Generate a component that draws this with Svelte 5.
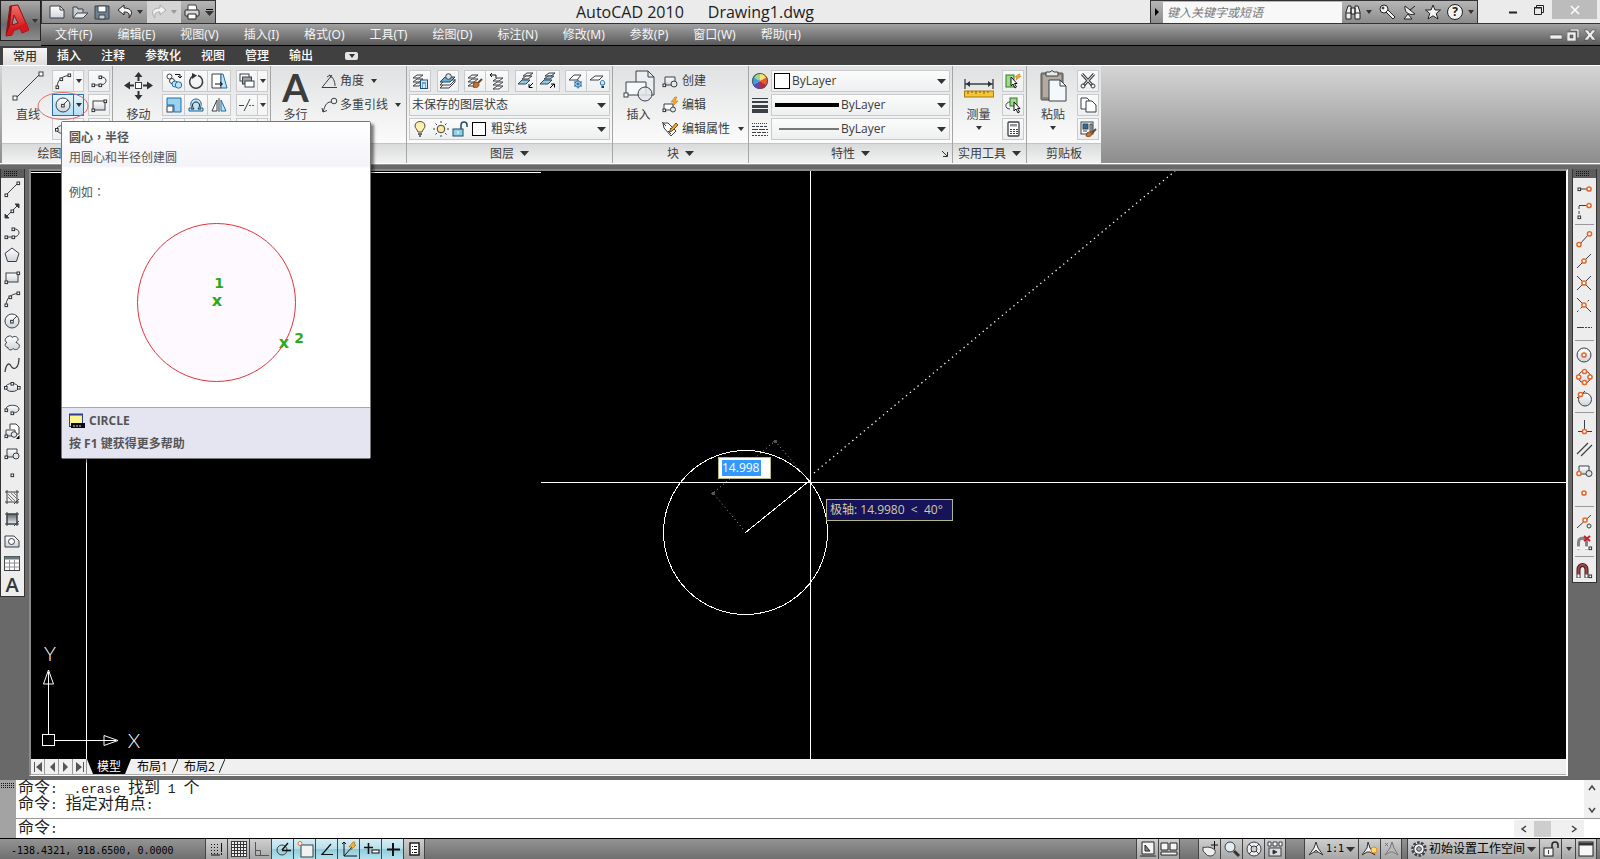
<script>
  const menus = ['文件(F)', '编辑(E)', '视图(V)', '插入(I)', '格式(O)', '工具(T)', '绘图(D)', '标注(N)', '修改(M)', '参数(P)', '窗口(W)', '帮助(H)']
  const tabs = ['常用', '插入', '注释', '参数化', '视图', '管理', '输出']

  const drawTools = [
    ['line', '直线'], ['xline', '构造线'], ['pline', '多段线'], ['polygon', '正多边形'], ['rect', '矩形'],
    ['arc', '圆弧'], ['circle', '圆'], ['cloud', '修订云线'], ['spline', '样条曲线'], ['ellipse', '椭圆'],
    ['ellarc', '椭圆弧'], ['insertBlock', '插入块'], ['makeBlock', '创建块'], ['point', '点'], ['hatch', '图案填充'],
    ['gradient', '渐变色'], ['region', '面域'], ['table', '表格'], ['text', '多行文字'],
  ]

  const snapTools = [
    [['trackPoint', '临时追踪点'], ['snapFrom', '捕捉自']],
    [['endpoint', '端点'], ['midpoint', '中点'], ['intersection', '交点'], ['apparent', '外观交点'], ['extension', '延长线']],
    [['center', '圆心'], ['quadrant', '象限点'], ['tangent', '切点']],
    [['perp', '垂足'], ['parallel', '平行线'], ['snapInsert', '插入点'], ['node', '节点']],
    [['nearest', '最近点'], ['snapNone', '无捕捉']],
    [['magnet', '对象捕捉设置']],
  ]

  const modes = [
    ['snap', '捕捉', false], ['grid', '栅格', false], ['ortho', '正交', false], ['polar', '极轴', true],
    ['osnap', '对象捕捉', true], ['otrack', '对象追踪', true], ['ducs', '动态 UCS', true], ['dyn', '动态输入', true],
    ['lwt', '线宽', true], ['qp', '快捷特性', false],
  ]

  const modifyRows = [
    [['copy', '复制'], ['rotate', '旋转'], ['stretch', '拉伸']],
    [['scale', '缩放'], ['offset', '偏移'], ['mirror', '镜像']],
    [['rect', '打断'], ['arc', '圆角'], ['line', '分解']],
  ]

  const layerGroups = [
    [['layerProps', '图层特性']],
    [['layerCurrent', '置为当前']],
    [['layerMatch', '匹配'], ['layerPrev', '上一个']],
    [['layerIso', '隔离'], ['layerUniso', '取消隔离']],
    [['layerFreeze', '冻结'], ['layerOff', '关闭']],
  ]

  // small square grip and orange snap marker
  const sq = (x, y) => `<rect x="${x - 1}" y="${y - 1}" width="2.6" height="2.6" fill="#fff" stroke="#2d3236"/>`
  const dot = (x, y) => `<circle cx="${x}" cy="${y}" r="2.1" fill="#fff" stroke="#e8672a" stroke-width="1.5"/>`
  const sheet = (x, y, fill = '#f4f6f8') => `<path d="M${x} ${y + 3}l4-3h6l-4 3z" fill="${fill}"/>`
  const sheets = (x, fill) => sheet(x, 10, fill) + sheet(x, 6, fill) + sheet(x, 2, fill)

  const icons = {
    line: `<path d="M2 14 14 2"/>${sq(2, 14)}${sq(14, 2)}`,
    xline: `<path d="M2 14 14 2"/><path d="M1 15v-4l4 4zM15 1v4l-4-4z" fill="#2d3236"/>${sq(8, 8)}`,
    pline: `<path d="M2 12h7M9 4c8-1 8 8 0 8"/>${sq(2, 12)}${sq(9, 12)}${sq(9, 4)}`,
    polygon: `<path d="m8 1 7 5.4L12.400 14.500H3.600L1 6.400z" fill="url(#pale)"/>`,
    rect: `<rect x="2" y="4" width="12" height="9" fill="url(#pale)"/>${sq(2, 13)}${sq(14, 4)}`,
    arc: `<path d="M2 15C2 8 6 3 14 2.500"/>${sq(2, 14)}${sq(6, 6)}${sq(14, 2)}`,
    circle: `<circle cx="8" cy="8" r="7" fill="url(#pale)"/><path d="m8 8 5-5"/>${sq(7.6, 8.4)}`,
    cloud: `<path d="M4 1.500c2-1 3-1 4 1 2-2 6-1 6 2 0 2-2 2-2 3 3 1 4 3 3 5s-4 3-6 1c-1 2-5 2-5-1-3 0-4-4-1-5-3-1-2-5 1-6z" fill="url(#pale)"/>`,
    spline: `<path d="M1 15c1-8 4-10 6-6 3 5 8 2 8-8" stroke-width="1.300"/>`,
    ellipse: `<ellipse cx="8" cy="8.500" rx="6.500" ry="4" fill="url(#pale)"/>${sq(1.500, 8.500)}${sq(14.500, 8.500)}${sq(8, 4.500)}`,
    ellarc: `<path d="M2 8c0-5 13-5 13 0 0 3-4 4-7 4" fill="url(#pale)"/>${sq(2, 9)}${sq(8, 12)}`,
    insertBlock: `<path d="M6 6V1h6l3 3v7h-4" fill="#fff"/><path d="M2 13V7h9v6z" fill="url(#pale)"/><circle cx="10" cy="11.500" r="2.800" fill="#e2e6ea"/>${sq(2, 13)}<path d="M15.500 12v4H12z" fill="#000" stroke="none"/>`,
    makeBlock: `<path d="M3 12V4h10v8z" fill="url(#pale)"/><circle cx="12" cy="11" r="3" fill="#e2e6ea"/>${sq(2, 12)}`,
    point: `${sq(8, 8)}`,
    hatch: `<path d="M1 3h14M1 13h14M3 1v14M13 1v14M10 15l5-5"/><path d="M4 5l7 7M4 8l4 4M7 4l6 6M10 4l3 3" stroke="#777"/>`,
    gradient: `<rect x="3" y="3" width="10" height="10" fill="url(#dark)"/><path d="M1 3h14M1 13h14M3 1v14M13 1v14M10 15l5-5"/>`,
    region: `<path d="M1 3h9l5 5v6H1z" fill="url(#pale)"/><circle cx="7.500" cy="8.500" r="3" fill="#fff"/>`,
    table: `<rect x=".5" y="1.500" width="15" height="14" fill="#fff"/><path d="M.5 3h15" stroke-width="3" stroke="#6d757c"/><path d="M.5 8h15M.5 12h15M5.500 5v10M10.500 5v10" stroke="#8a9096"/>`,

    trackPoint: `<path d="M3 8h8"/>${sq(3, 8)}${dot(13, 8)}`,
    snapFrom: `<path d="M3 2.500h8"/><path d="M3 3v10" stroke-dasharray="3 2"/>${sq(3, 14)}${dot(13, 2.500)}`,
    endpoint: `<path d="M3 14 13 3"/>${dot(3, 13.500)}${dot(13.500, 2.800)}`,
    midpoint: `<path d="M1 15 15 1"/>${dot(8, 8)}`,
    intersection: `<path d="m1 1 14 14M1 15 15 1"/>${dot(8, 8)}`,
    apparent: `<path d="m1 1 14 14"/><path d="M1 15 15 1" stroke-dasharray="2 3"/>${dot(8, 8)}`,
    extension: `<path d="M1 8.500h7"/><path d="M9 8.500h7" stroke-dasharray="2 1"/>`,
    center: `<circle cx="8" cy="8" r="7" fill="url(#pale)"/>${dot(8, 8)}`,
    quadrant: `<circle cx="8.500" cy="8" r="6" fill="url(#pale)"/>${dot(8.500, 2.500)}${dot(8.500, 13.500)}${dot(2.700, 8)}${dot(14, 8)}`,
    tangent: `<circle cx="9" cy="8.500" r="6.500" fill="url(#pale)"/><path d="m1 7 8-7"/>${dot(4.500, 3.500)}`,
    perp: `<path d="M8.500 1v12M2 12.500h14"/>${dot(8.500, 12.500)}`,
    parallel: `<path d="M1 13 12 2M5 15 16 4" stroke-width="1.200"/>`,
    snapInsert: `<path d="M3 11V3h10v8z" fill="url(#pale)"/><circle cx="13" cy="10.500" r="3" fill="#dfe4e8"/>${dot(3, 10.500)}`,
    node: dot(8, 8),
    nearest: `<path d="M1 15 15 2"/><circle cx="13" cy="13" r="2"/>${dot(9, 7)}`,
    snapNone: `<path d="M2.500 15V7c0-5 8-5 8 0v8" stroke="#858585" stroke-width="3"/><path d="M1 13h3M9 13h3" stroke="#fff" stroke-width="3"/><path d="m8 1 6 5M14 1 8 6" stroke="#d3161d" stroke-width="1.800"/>${sq(14, 13)}`,
    magnet: `<path d="M2.500 15V6.500c0-6 8-6 8 0V15" stroke="#3a2020" stroke-width="4"/><path d="M2.500 15V6.500c0-6 8-6 8 0V15" stroke="#a2474b" stroke-width="2"/><path d="M1.500 13h2M9.500 13h2" stroke="#fff" stroke-width="3"/>${sq(14, 13)}`,

    copy: `<circle cx="3.500" cy="3.500" r="2.500" fill="#fff"/><circle cx="6" cy="8" r="2.500" fill="#fff"/><path d="M9 1.500h5V5M12 3l2 2 2-2" stroke="#111"/><circle cx="9" cy="11" r="3" fill="#bfe4f7" stroke="#1f6fa8"/><circle cx="12.500" cy="12" r="3.200" fill="#bfe4f7" stroke="#1f6fa8"/>`,
    rotate: `<path d="M10 2.500a6.500 6.500 0 1 1-5 .5" stroke-width="1.500"/><path d="M4 0l5 2.500L4 6z" fill="#333" stroke="none"/>`,
    stretch: `<path d="M1 15V1h9v14z" fill="#fff"/><path d="M10 1h2l4 14h-6z" fill="#bfe4f7" stroke="#1f6fa8"/><path d="M4 11h7M9 9l2.500 2L9 13" stroke="#111"/>`,
    scale: `<path d="M1 1h14v14H8V8H1z" fill="#9bd3ee" stroke="#1f6fa8"/><rect x="1" y="9" width="6" height="6" fill="#fff"/>`,
    offset: `<path d="M1 14h14v-3h-3c3-5 0-9-4-9s-7 4-4 9H1z" fill="#bfe4f7" stroke="#1f5f95"/><path d="M3 12h3c-3-4-1-7 2-7s5 3 2 7h3" stroke="#222"/>`,
    mirror: `<path d="M1 14h5V3z" fill="#fff"/><path d="M15 14h-5V3z" fill="#bfe4f7" stroke="#1f6fa8"/><path d="M8 1v14"/>`,
    array: `<rect x="1" y="1" width="9" height="7" fill="#fff"/><rect x="3.500" y="4" width="9" height="7" fill="#9aa2a8"/><rect x="6" y="8" width="9" height="6" fill="#fff"/>`,
    trim: `<path d="M0 8.500h5"/><path d="M10 8.500h6" stroke="#1f6fa8" stroke-dasharray="2 1"/><path d="M5 14 11 2"/>`,
    angleDim: `<path d="M1 14.500h15M1 14.500 11 2M8 2c4 2 6 6 6 11M6 4l3-2 1 3"/>`,
    leader: `<path d="M2 15C4 9 5 5 10 5M1 11l1 4 4-1.500"/><circle cx="13" cy="4" r="2.800"/>`,

    layerProps: sheets(1) + `<rect x="8.500" y="7" width="7" height="8.500" fill="#d5ebf7" stroke="#1d4f7c"/><path d="M10 10h4M10 12h1M13 12h1M10 14h1M13 14h1" stroke="#1d4f7c"/>`,
    layerCurrent: `<path d="M0 15h9l6-6v-3M0 15l3-3" /><path d="M0 12l5-5h10l-5 5z" fill="#fff"/><path d="M0 9l5-5h10l-5 5z" fill="#5fb2e0"/><circle cx="8.500" cy="3.500" r="2.800" fill="#dce1e5"/>`,
    layerMatch: sheets(1) + `<path d="m15 6-4 4" stroke="#6b4322" stroke-width="2"/><path d="M7 10c3-2 5 0 5 2-1 3-4 3-6 2z" fill="#c8732d" stroke="#81451a"/>`,
    layerPrev: `<g transform="translate(4 3)">${sheets(0)}</g><path d="M7 5V2H1M3 0 1 2l2 2" stroke="#111"/>`,
    layerIso: sheet(5, 0) + sheet(4, 3) + `<path d="M0 11l4-4h8l-4 4z" fill="#8ccbec"/><path d="m15 10-4 4M11 11v3.500h3.500" stroke="#000"/>`,
    layerUniso: sheet(5, 0) + sheet(4, 3, '#8ccbec') + `<path d="M0 11l4-4h8l-4 4z" fill="#8ccbec"/><path d="m10 15 4-4M11 11h3.500v3.500" stroke="#000"/>`,
    layerFreeze: `<path d="M1 7l5-5h7L9 7z" fill="#fff"/><circle cx="10" cy="11" r="3.200" fill="#fff" stroke="#1f6fa8"/><path d="M10 6.500v9M6 8.700l8 4.600M6 13.300l8-4.600" stroke="#1f6fa8"/>`,
    layerOff: `<path d="M0 7l5-4h8L9 7z" fill="#fff"/><path d="M11 12c-3-6 6-6 3 0z" fill="#cfe8f7" stroke="#1f6fa8"/><path d="M11.500 14h2.500" stroke="#333" stroke-width="2"/>`,
    bulb: `<path d="M6 11C5 8 3 7 3 5c0-6 10-6 10 0 0 2-2 3-3 6z" fill="#ffeeb0" stroke="#54493a"/><path d="M6 13h4M7 15h2" stroke="#444" stroke-width="1.500"/>`,
    sun: `<circle cx="8" cy="8" r="3.800" fill="#ffe89a"/><path d="M8 0v2M8 14v2M0 8h2M14 8h2M2.500 2.500 4 4M12 12l1.500 1.500M2.500 13.500 4 12M12 4l1.500-1.500"/>`,
    unlock: `<rect x="1" y="8" width="10" height="7" fill="#8fd0e6" stroke="#1c4c66"/><path d="M9 8V4c0-4 6-4 6 0v2" stroke="#1c4c66" stroke-width="1.500"/><path d="M6 10v3" stroke="#fff"/>`,
    blockEdit: `<path d="M2 13V7h9v6z" fill="#fff"/><circle cx="11" cy="12.500" r="2.500" fill="#e2e6ea"/>${sq(2, 13)}<path d="m13 0-4 5h3l-1 4 5-5h-3l2-4z" fill="#f6a623" stroke="#c86a10" stroke-width=".5"/>`,
    blockAttr: `<path d="M1 2h5l8 8-5 5-7-8z" fill="#fff"/><path d="M0 1l4 4M6 10l3 3M8 7l3 3"/><path d="m8 9 6-7 2 2-6 6-2.500 1z" fill="#f0a63a" stroke="#7a4d12"/>`,
    weights: `<path d="M0 1.500h16" /><path d="M0 5h16" stroke-width="2"/><path d="M0 9.500h16" stroke-width="3"/><path d="M0 14h16" stroke-width="4"/>`,
    types: `<path d="M0 2.500h16" stroke-dasharray="1 1"/><path d="M0 5.500h16" stroke-dasharray="3 1"/><path d="M0 8.500h16" stroke-dasharray="6 1"/><path d="M0 11.500h16" stroke-dasharray="4 1"/><path d="M0 14.500h16" stroke-dasharray="2 1"/>`,
    colors: `<g stroke="none"><path d="M8 8 8 0a8 8 0 0 1 7 4z" fill="#f6c71c"/><path d="M8 8l7-4a8 8 0 0 1 0 8z" fill="#ef5a24"/><path d="m8 8 7 4a8 8 0 0 1-7 4z" fill="#c2273f"/><path d="M8 8v8a8 8 0 0 1-7-4z" fill="#5b46c4"/><path d="m8 8-7 4a8 8 0 0 1 0-8z" fill="#3ba1dc"/><path d="M8 8 1 4a8 8 0 0 1 7-4z" fill="#52b848"/></g><circle cx="8" cy="8" r="7.500" stroke="#555"/><ellipse cx="8" cy="4" rx="5" ry="3" fill="#fff" opacity=".45" stroke="none"/>`,
    quickSelect: `<rect x="1" y="2" width="8" height="12" fill="#9edb8c" stroke="#2c7a27"/><path d="M6 4v9l2-2 2 4 1.500-1-2-3.500H12z" fill="#fff" stroke="#111"/><path d="m14 1-4 3h2l-1 3 5-4h-2l1-2z" fill="#f6a623" stroke="#c86a10" stroke-width=".5"/>`,
    selectAll: `<path d="M5 5c-5 0-6 7 0 7" /><rect x="5" y="1" width="7" height="8" fill="#9edb8c" stroke="#2c7a27"/><path d="M9 5v9l2-2 2 4 1.500-1-2-3.500H15z" fill="#fff" stroke="#111"/>`,
    calc: `<rect x="3" y="1" width="11" height="14" rx="1" fill="#fff" stroke-width="1.300"/><rect x="5" y="3" width="7" height="2.500" fill="#8d949a" stroke="none"/><path d="M5 8.500h8M5 10.500h8M5 12.500h8" stroke-dasharray="2 1"/>`,
    cut: `<path d="m2 1 10 11M14 1 4 12" stroke-width="3"/><path d="m2 1 10 11M14 1 4 12" stroke="#fff"/><circle cx="3" cy="13" r="2"/><circle cx="13" cy="13" r="2"/>`,
    copyClip: `<path d="M1 12V1h6l2 2v9z" fill="#fff"/><path d="M6 15V4h6l4 4v7z" fill="#fff"/>`,
    matchProps: `<rect x="1" y="1" width="12" height="12" fill="#fff"/><rect x="3" y="3" width="5" height="5" fill="#2d6aa5"/><path d="M10 3h2v8h-2zM3 10h4" fill="#ccc"/><path d="m16 8-4 4" stroke="#6b4322" stroke-width="2"/><path d="M7 12c3-2 5 0 5 1-1 3-4 3-6 2z" fill="#c8732d" stroke="#81451a"/>`,

    new: `<path d="M1 2h10l4 4v8H1z" fill="url(#pale)"/><path d="M11 2v4h4"/>`,
    open: `<path d="M1 14V3h4l1 2h5v3" fill="#c9ced3"/><path d="m1 14 4-5h11l-5 5z" fill="#e6eaee"/>`,
    save: `<path d="M1 2h14v13H1z" fill="#6e8296"/><path d="M4 2h8v6H4z" fill="#fff"/><path d="M5 11h6v4H5z" fill="#ccd2d8"/>`,
    undo: `<path d="M7 1 1 6l6 5V8c4 0 6 1 5 6 5-6 2-10-5-10z" fill="#f4f4f4" stroke="#222"/>`,
    redo: `<path d="m9 1 6 5-6 5V8c-4 0-6 1-5 6-5-6-2-10 5-10z" fill="#f0f0f0" stroke="#aaa"/>`,
    print: `<path d="M4 6V1h8l1 5" fill="#fff"/><rect x="1" y="6" width="14" height="6" rx="1" fill="#d5d9dc" stroke="#222"/><path d="M4 10h8v5H4z" fill="#fff" stroke="#222"/>`,
    binoculars: `<path d="M1 15V8l2-6h3v13zM10 15V2h3l2 6v7zM6 4h4v6H6z" fill="#eee" stroke="#222"/><path d="M1 9h5M10 9h5" stroke="#222"/>`,
    key: `<circle cx="5" cy="5" r="4" fill="#f2f2f2" stroke="#222"/><path d="m7 8 7 7 2-2-7-7z" fill="#f2f2f2" stroke="#222"/><circle cx="4" cy="4" r="1" fill="#222"/>`,
    dish: `<path d="M3 2c-1 6 4 10 10 8z" fill="#eee" stroke="#222"/><path d="m8 6 5-4M2 15l4-5 4 5z" fill="#eee" stroke="#222"/>`,
    star: `<path d="m8 1 2 5h5.500l-4.300 3.500L13 15l-5-3.200L3 15l1.800-5.500L.5 6H6z" fill="#f4f4f4" stroke="#222"/>`,

    snap: `<path d="M2 3.500h9M2 6.500h9M2 9.500h9M2 12.500h9" stroke-dasharray="1 2" stroke="#111"/><path d="M2 14h9M12.500 2v9M12.500 12v2" stroke="#111"/>`,
    grid: `<rect x=".5" y=".5" width="15" height="15" fill="#eee"/><path d="M.5 3.500h15M.5 6.500h15M.5 9.500h15M.5 12.500h15M3.500 .5v15M6.500 .5v15M9.500 .5v15M12.500 .5v15" stroke="#333"/>`,
    ortho: `<path d="M2.500 1v13.500H16M2.500 9.500h5v5" stroke="#555"/>`,
    polar: `<circle cx="7" cy="9" r="5"/><path d="M7 9l6-7M7 9.500h9" stroke="#111" stroke-width="1.400"/>`,
    osnap: `<rect x="4" y="4" width="12" height="12" fill="#f2f2f2"/><circle cx="3" cy="2.500" r="2" fill="#fff" stroke="#e8672a"/>`,
    otrack: `<path d="M12 3 3 13.500h11" stroke="#111" stroke-width="1.200"/>`,
    ducs: `<path d="M3 1v14h13M3 15 12 5M1 3l2-2 2 2" stroke="#111"/><path d="m12 1-4 5h3l-1 3 5-5h-2l1-3z" fill="#f6b52c" stroke="#a86410" stroke-width=".6"/>`,
    dyn: `<path d="M5.500 2v11M1 6.500h9" stroke="#111" stroke-width="1.600"/><rect x="9" y="9" width="7" height="3" fill="#fff" stroke="#111"/>`,
    lwt: `<path d="M8 2v13M2 8.500h13" stroke="#111" stroke-width="2"/>`,
    qp: `<rect x="4" y="2" width="9" height="12" fill="#fff" stroke="#111" stroke-width="1.400"/><path d="M6 5.500h5M6 8.500h5M6 11.500h5" stroke="#111" stroke-dasharray="1 1 3"/>`,

    modelSpace: `<path d="M2 1h12v12H2z" fill="#f5f5f5" stroke="#222"/><path d="M5 4v6h5z" fill="#888" stroke="#222"/><path d="M0 15h16" stroke="#222"/>`,
    viewports: `<path d="M0 2h7v7H0zM9 2h7v7H9zM0 11h16v3H0z" fill="#f5f5f5" stroke="#222"/>`,
    pan: `<path d="M1 6c3 1 3 0 5 0l4 1 3 2c1 4-2 6-5 6-4 0-4-3-7-5z" fill="#eee"/><path d="M12.500 0v8M9 4h7" stroke="#111"/>`,
    zoom: `<circle cx="6" cy="6" r="5" fill="#e3edf4"/><path d="m10 10 5 5" stroke="#333" stroke-width="3"/>`,
    wheel: `<circle cx="8" cy="8" r="7" fill="#eee"/><circle cx="8" cy="8" r="3" fill="#ccc"/><path d="M3 3l3 3M10 10l3 3M13 3l-3 3M3 13l3-3"/>`,
    motion: `<path d="M1 1h3v4H1zM6 1h4v4H6zM12 1h3v4h-3z" fill="#fff"/><rect x="2" y="7" width="12" height="8" fill="#ddd"/><path d="m6 9 4 2-4 2z" fill="#222"/>`,
    anno: `<path d="M8 1 6 7l-5 7 5-3h4l5 3-5-7z" fill="#f4f4f4" stroke="#333"/><path d="M6 11l2-2 2 2" />`,
    annoSun: `<path d="M6 1 5 7l-5 7 5-3h3l5 3-5-7z" fill="#f4f4f4" stroke="#333"/><circle cx="12" cy="9" r="3" fill="#ffd76a" stroke="#e58a1f"/>`,
    annoOff: `<path d="M9 1 7 7l-5 7 5-3h3l5 3-4-7zM2 2l3 3M2 5l3-3" fill="#bbb" stroke="#777"/>`,
    gear: `<circle cx="8" cy="8" r="6.500" fill="#eee" stroke-dasharray="2.500 1.500" stroke-width="2.500"/><circle cx="8" cy="8" r="5.200" fill="#f2f2f2"/><circle cx="8" cy="8" r="2.300" fill="#aaa"/>`,
    lock: `<rect x="1" y="7" width="9" height="8" fill="#f5f5f5" stroke="#222"/><path d="M9 7V4c0-4 6-4 6 0v3" stroke="#222" stroke-width="1.500"/><path d="M5.500 9v4"/>`,
    clean: `<rect x="1" y="1" width="14" height="14" fill="#f7f7f7" stroke="#222"/><path d="M1 3h14" stroke="#333" stroke-width="3"/>`,

    bigLine: `<path d="M4 28 28 4"/><rect x="1" y="26" width="4" height="4" fill="#fff"/><rect x="27" y="2" width="4" height="4" fill="#fff"/>`,
    bigMove: `<rect x="12.500" y="12.500" width="6" height="6" fill="#fff"/><path d="M15.500 2l4 5h-3v4h-2V7h-3zM15.500 30l4-5h-3v-4h-2v4h-3zM1 15.500l6-4v3h4v2H7v3zM30 15.500l-6-4v3h-4v2h4v3z" fill="#2d3236" stroke="none"/>`,
    bigInsert: `<path d="M13 14V1h12l6 6v18H20" fill="#eceff1"/><path d="M25 1v6h6"/><path d="M3 25V12h20v13z" fill="#f6f8f9"/><circle cx="22" cy="24" r="7" fill="#e3e7ea" fill-opacity=".85"/><rect x="1" y="23" width="4" height="4" fill="#fff"/>`,
    bigMeasure: `<path d="M2 9v10M30 9v10M2 14h28" stroke-width="1.300"/><path d="m3 14 4-3v6zM29 14l-4-3v6z" fill="#2d3236" stroke="none"/><rect x="1.500" y="21" width="29" height="6" fill="#f4c535" stroke="#a77a12"/><path d="M5 21v3M9 21v2M13 21v3M17 21v2M21 21v3M25 21v2" stroke="#7d5c0c"/>`,
    bigPaste: `<rect x="4" y="3" width="22" height="27" rx="1" fill="#8c867f" stroke="#55504b"/><rect x="6" y="5" width="18" height="22" fill="#b1aba4" stroke="none"/><path d="M9 6V2h4q2-3 4 0h4v4z" fill="#e9e9e9"/><path d="M12 31V10h11l6 6v15z" fill="#f5f8fa"/><path d="M23 10v6h6"/>`,
  }
</script>

{#snippet icon(name)}
  <svg class="icon" viewBox="0 0 16 16" aria-hidden="true">
    {#if name === 'text'}
      <text x="8" y="15" text-anchor="middle" class="glyph">A</text>
    {:else}
      <g>{@html icons[name]}</g>
    {/if}
  </svg>
{/snippet}

{#snippet bigIcon(name)}
  <svg class="icon big" viewBox="0 0 32 32" aria-hidden="true"><g>{@html icons[name]}</g></svg>
{/snippet}

{#snippet caret()}
  <svg class="caret" viewBox="0 0 9 5" aria-hidden="true"><path d="M0 0h9L4.500 5z" /></svg>
{/snippet}

{#snippet smallCaret()}
  <svg class="caret small" viewBox="0 0 6 4" aria-hidden="true"><path d="M0 0h6L3 4z" /></svg>
{/snippet}

{#snippet split(name, label, active = false)}
  <div class="split" class:active>
    <button class="tool" aria-label={label}>{@render icon(name)}</button>
    <button class="drop" aria-label="{label}选项">{@render smallCaret()}</button>
  </div>
{/snippet}

<svg class="defs" aria-hidden="true">
  <defs>
    <linearGradient id="pale" x1="0" y1="0" x2="0" y2="1">
      <stop offset="0" stop-color="#fff" />
      <stop offset="1" stop-color="#cfd5da" />
    </linearGradient>
    <linearGradient id="dark" x1="0" y1="0" x2="0" y2="1">
      <stop offset="0" stop-color="#5d666d" />
      <stop offset="1" stop-color="#eceff1" />
    </linearGradient>
    <linearGradient id="ruby" x1="0" y1="0" x2="0" y2="1">
      <stop offset="0" stop-color="#f0706a" />
      <stop offset="0.6" stop-color="#dc2a2c" />
      <stop offset="1" stop-color="#c0161c" />
    </linearGradient>
  </defs>
</svg>

<div class="app">
  <header>
    <button class="logo" aria-label="应用程序菜单">
      <svg viewBox="0 0 24 34" width="24" height="34" aria-hidden="true">
        <path d="M5 2 13 1l11 25-7 3-2-5c-2 1-4 2-6 2l-2 5-6 1z" fill="url(#ruby)" stroke="#8b1216" />
        <path d="m9 11 4 8-6 2z" fill="#9a9a9a" stroke="#8b1216" />
        <path d="M5 2h2L5 22 2 31l-1 1z" fill="#8e1015" />
        <path d="M1 32 4 24c7 0 12-2 17-6l3 8-7 3-2-5c-2 1-4 2-6 2l-2 5z" fill="#d3191f" />
      </svg>
      {@render smallCaret()}
    </button>

    <div class="titlebar">
      <div class="quick">
        <button aria-label="新建">{@render icon('new')}</button>
        <button aria-label="打开">{@render icon('open')}</button>
        <button aria-label="保存">{@render icon('save')}</button>
        <button class="wide" aria-label="放弃">{@render icon('undo')}{@render smallCaret()}</button>
        <button class="wide faded" aria-label="重做">{@render icon('redo')}{@render smallCaret()}</button>
        <button aria-label="打印">{@render icon('print')}</button>
        <button class="custom" aria-label="自定义快速访问工具栏"><i></i>{@render caret()}</button>
      </div>
      <h1><span>AutoCAD 2010</span><span>Drawing1.dwg</span></h1>
      <div class="search">
        <button class="toggle" aria-label="展开搜索"><svg viewBox="0 0 4 8" width="4" height="8"><path d="M0 0l4 4-4 4z" /></svg></button>
        <input type="text" placeholder="键入关键字或短语" aria-label="搜索" />
        <button class="wide" aria-label="查找">{@render icon('binoculars')}{@render smallCaret()}</button>
        <button aria-label="速博应用中心">{@render icon('key')}</button>
        <button aria-label="通讯中心">{@render icon('dish')}</button>
        <button aria-label="收藏夹">{@render icon('star')}</button>
        <button class="wide" aria-label="帮助"><b class="help">?</b>{@render smallCaret()}</button>
      </div>
      <div class="window-buttons">
        <button aria-label="最小化"><svg viewBox="0 0 12 12"><path d="M2 8.500h8" stroke-width="2" /></svg></button>
        <button aria-label="还原"><svg viewBox="0 0 12 12"><path d="M1.500 3.500h7v7h-7zM3.500 3V1.500h7v7H9M1 4h8" /></svg></button>
        <button class="close" aria-label="关闭"><svg viewBox="0 0 12 12"><path d="m2 2 8 8M10 2l-8 8" stroke-width="1.500" /></svg></button>
      </div>
    </div>

    <nav class="menubar">
      {#each menus as menu}
        <button>{menu}</button>
      {/each}
      <div class="doc-buttons">
        <button aria-label="最小化图形"><svg viewBox="0 0 12 12"><path d="M0 6h12v4H0z" /></svg></button>
        <button aria-label="还原图形"><svg viewBox="0 0 12 12"><path d="M3 0h9v9h-2V2H3zM0 3h9v9H0zM3 6v3h3V6z" fill-rule="evenodd" /></svg></button>
        <button aria-label="关闭图形"><svg viewBox="0 0 12 12"><path d="M0 1h4l2 3 2-3h4L8 6l4 5H8L6 8l-2 3H0l4-5z" /></svg></button>
      </div>
    </nav>
  </header>

  <nav class="tabs">
    {#each tabs as tab, i}
      <button class:current={i === 0}>{tab}</button>
    {/each}
    <button class="minimize" aria-label="最小化功能区"><span>{@render smallCaret()}</span></button>
  </nav>

  <div class="ribbon">
    <section class="panel draw">
      <div class="body">
        <button class="large">{@render bigIcon('bigLine')}直线</button>
        <div class="stack">
          <div class="row">{@render split('arc', '圆弧')}<button class="tool" aria-label="多段线">{@render icon('pline')}</button></div>
          <div class="row">{@render split('circle', '圆', true)}<button class="tool" aria-label="矩形">{@render icon('rect')}</button></div>
          <div class="row">{@render split('ellipse', '椭圆')}<button class="tool" aria-label="图案填充">{@render icon('hatch')}</button></div>
        </div>
      </div>
      <h2>绘图 {@render caret()}</h2>
    </section>

    <section class="panel modify">
      <div class="body">
        <button class="large">{@render bigIcon('bigMove')}移动</button>
        <div class="stack">
          {#each modifyRows as row, i}
            <div class="row">
              <div class="group">
                {#each row as [name, label]}
                  <button class="tool" aria-label={label}>{@render icon(name)}</button>
                {/each}
              </div>
              {@render split(i === 0 ? 'array' : 'trim', i === 0 ? '阵列' : '修剪')}
            </div>
          {/each}
        </div>
      </div>
      <h2>修改 {@render caret()}</h2>
    </section>

    <section class="panel annotate">
      <div class="body">
        <button class="large"><b class="big-a">A</b>多行</button>
        <div class="stack">
          <button class="command">{@render icon('angleDim')}角度 {@render smallCaret()}</button>
          <button class="command">{@render icon('leader')}多重引线 {@render smallCaret()}</button>
          <button class="command">{@render icon('table')}表格</button>
        </div>
      </div>
      <h2>注释 {@render caret()}</h2>
    </section>

    <section class="panel layers">
      <div class="body">
        <div class="stack">
          <div class="row">
            {#each layerGroups as group}
              <div class="group">
                {#each group as [name, label]}
                  <button class="tool" aria-label={label}>{@render icon(name)}</button>
                {/each}
              </div>
            {/each}
          </div>
          <div class="combo">
            <select aria-label="图层状态"><option>未保存的图层状态</option></select>
            {@render caret()}
          </div>
          <div class="combo layer">
            {@render icon('bulb')}{@render icon('sun')}{@render icon('unlock')}<i class="swatch small"></i>
            <select aria-label="图层"><option>粗实线</option></select>
            {@render caret()}
          </div>
        </div>
      </div>
      <h2>图层 {@render caret()}</h2>
    </section>

    <section class="panel block">
      <div class="body">
        <button class="large">{@render bigIcon('bigInsert')}插入</button>
        <div class="stack">
          <button class="command">{@render icon('makeBlock')}创建</button>
          <button class="command">{@render icon('blockEdit')}编辑</button>
          <button class="command">{@render icon('blockAttr')}编辑属性 {@render smallCaret()}</button>
        </div>
      </div>
      <h2>块 {@render caret()}</h2>
    </section>

    <section class="panel props">
      <div class="body">
        <div class="stack">
          <div class="row">
            {@render icon('colors')}
            <div class="combo"><i class="swatch"></i><select aria-label="对象颜色"><option>ByLayer</option></select>{@render caret()}</div>
          </div>
          <div class="row">
            {@render icon('weights')}
            <div class="combo"><i class="sample thick"></i><select aria-label="线宽"><option>ByLayer</option></select>{@render caret()}</div>
          </div>
          <div class="row">
            {@render icon('types')}
            <div class="combo"><i class="sample"></i><select aria-label="线型"><option>ByLayer</option></select>{@render caret()}</div>
          </div>
        </div>
      </div>
      <h2>
        特性 {@render caret()}
        <button class="launcher" aria-label="特性选项板"><svg viewBox="0 0 6 6" width="6" height="6"><path d="M0 0l5 5M5.500 1v4.500H1" /></svg></button>
      </h2>
    </section>

    <section class="panel utils">
      <div class="body">
        <button class="large">{@render bigIcon('bigMeasure')}测量{@render smallCaret()}</button>
        <div class="stack">
          <button class="tool" aria-label="快速选择">{@render icon('quickSelect')}</button>
          <button class="tool" aria-label="全部选择">{@render icon('selectAll')}</button>
          <button class="tool" aria-label="快速计算器">{@render icon('calc')}</button>
        </div>
      </div>
      <h2>实用工具 {@render caret()}</h2>
    </section>

    <section class="panel clipboard">
      <div class="body">
        <button class="large">{@render bigIcon('bigPaste')}粘贴{@render smallCaret()}</button>
        <div class="stack">
          <button class="tool" aria-label="剪切">{@render icon('cut')}</button>
          <button class="tool" aria-label="复制裁剪">{@render icon('copyClip')}</button>
          <button class="tool" aria-label="特性匹配">{@render icon('matchProps')}</button>
        </div>
      </div>
      <h2>剪贴板</h2>
    </section>
  </div>

  <main>
    <div class="dock">
      <div class="toolbar">
        <div class="handle"><i class="dots"></i></div>
        {#each drawTools as [name, label]}
          <button aria-label={label}>{@render icon(name)}</button>
        {/each}
      </div>
    </div>

    <div class="document">
      <div class="canvas">
        <svg class="drawing" aria-hidden="true">
          <path d="M0 1.500h510" />
          <line x1="55.500" y1="0" x2="55.500" y2="100%" />
          <line x1="779.500" y1="0" x2="779.500" y2="100%" />
          <line x1="510" y1="311.500" x2="100%" y2="311.500" />
          <circle cx="714.500" cy="361.500" r="82" />
          <path d="M714.500 361.500 779.500 309" />
          <path class="track" d="M783 302 1144 0" />
          <path class="dim" d="m712 358-30-36 62-52 35 41" />
          <circle class="node" cx="682.500" cy="322.500" r="2" />
          <circle class="node" cx="744.500" cy="270.500" r="2" />
        </svg>
        <svg class="ucs" width="130" height="130" aria-hidden="true">
          <rect x="11.500" y="105.500" width="12" height="11" />
          <path d="M17.500 105V54M24 111.500h49" />
          <path d="m17.500 41-5 14h10zM17.500 43v11M87 111.500l-14-5v10zM85 111.500H73" />
          <text x="19" y="32" text-anchor="middle">Y</text>
          <text x="103" y="119" text-anchor="middle">X</text>
        </svg>
        <label class="radius"><input type="text" value="14.998" aria-label="半径" /></label>
        <div class="polar">{'极轴: 14.9980  <  40°'}</div>
      </div>

      <div class="sheets">
        <button class="step" aria-label="第一个"><svg viewBox="0 0 10 10"><path d="M1 0v10h1V0zM9 0v10L3 5z" /></svg></button>
        <button class="step" aria-label="上一个"><svg viewBox="0 0 10 10"><path d="M8 0v10L3 5z" /></svg></button>
        <button class="step" aria-label="下一个"><svg viewBox="0 0 10 10"><path d="M2 0v10l5-5z" /></svg></button>
        <button class="step" aria-label="最后一个"><svg viewBox="0 0 10 10"><path d="M8 0v10h1V0zM1 0v10l6-5z" /></svg></button>
        <button class="sheet model">模型</button>
        <button class="sheet">布局1</button>
        <svg class="slash" viewBox="0 0 6 14"><path d="M0 14 6 0" /></svg>
        <button class="sheet">布局2</button>
        <svg class="slash" viewBox="0 0 6 14"><path d="M0 14 6 0" /></svg>
      </div>
    </div>

    <div class="dock right">
      <div class="toolbar">
        <div class="handle"><i class="dots"></i></div>
        {#each snapTools as group, i}
          {#if i > 0}<hr />{/if}
          {#each group as [name, label]}
            <button aria-label={label}>{@render icon(name)}</button>
          {/each}
        {/each}
      </div>
    </div>
  </main>

  <section class="console">
    <div class="grip"><i class="dots"></i></div>
    <div class="lines">
      <div class="history">
        <div class="log">
          <p>命令<code>{': _.erase '}</code>找到<code>{' 1 '}</code>个</p>
          <p>命令<code>{': '}</code>指定对角点<code>:</code></p>
        </div>
        <div class="vscroll">
          <button aria-label="向上滚动"><svg viewBox="0 0 8 6"><path d="m1 5 3-4 3 4" /></svg></button>
          <button aria-label="向下滚动"><svg viewBox="0 0 8 6"><path d="m1 1 3 4 3-4" /></svg></button>
        </div>
      </div>
      <div class="prompt">
        <label for="command">命令<code>:</code></label>
        <input id="command" type="text" />
        <div class="hscroll">
          <button aria-label="向左滚动"><svg viewBox="0 0 6 8"><path d="M5 1 1 4l4 3" /></svg></button>
          <i></i>
          <button aria-label="向右滚动"><svg viewBox="0 0 6 8"><path d="m1 1 4 3-4 3" /></svg></button>
        </div>
      </div>
    </div>
  </section>

  <footer>
    <output>-138.4321, 918.6500, 0.0000</output>
    <div class="cluster">
      {#each modes as [name, label, on]}
        <button class:on aria-label={label}>{@render icon(name)}</button>
      {/each}
    </div>
    <div class="cluster end">
      <button aria-label="模型空间">{@render icon('modelSpace')}</button>
      <button aria-label="快速查看图形">{@render icon('viewports')}</button>
    </div>
    <div class="cluster">
      <button aria-label="平移">{@render icon('pan')}</button>
      <button aria-label="缩放">{@render icon('zoom')}</button>
      <button aria-label="控制盘">{@render icon('wheel')}</button>
      <button aria-label="ShowMotion">{@render icon('motion')}</button>
    </div>
    <div class="cluster">
      <button class="scale">{@render icon('anno')}<code>1:1</code>{@render caret()}</button>
      <button aria-label="注释可见性">{@render icon('annoSun')}</button>
      <button aria-label="自动缩放">{@render icon('annoOff')}</button>
    </div>
    <div class="cluster last">
      <button class="workspace">{@render icon('gear')}初始设置工作空间{@render caret()}</button>
      <button aria-label="锁定">{@render icon('lock')}</button>
      <button class="narrow" aria-label="状态栏菜单">{@render smallCaret()}</button>
      <button aria-label="全屏显示">{@render icon('clean')}</button>
    </div>
  </footer>

  <svg class="marker" viewBox="0 0 52 30" aria-hidden="true"><ellipse cx="26" cy="15" rx="25" ry="13.500" /></svg>

  <aside class="tooltip" role="tooltip">
    <div class="intro">
      <h3 class="subject">圆心，半径</h3>
      <p>用圆心和半径创建圆</p>
      <p class="example">例如：</p>
      <svg viewBox="0 0 180 162" width="180" height="162" aria-hidden="true">
        <circle cx="80.500" cy="80.500" r="79" />
        <text x="83" y="66" text-anchor="middle">1</text>
        <text class="cross" x="81" y="84" text-anchor="middle">x</text>
        <text class="cross" x="148" y="126" text-anchor="middle">x</text>
        <text x="163" y="121" text-anchor="middle">2</text>
      </svg>
    </div>
    <div class="more">
      <h3>
        <svg viewBox="0 0 16 16" width="16" height="16" aria-hidden="true">
          <rect x="0.500" y="1.500" width="13" height="12" fill="#fbf68e" stroke="#2c3d8f" />
          <path d="M0 1.500h14" stroke="#2c3d8f" stroke-width="2" />
          <path d="M2 10h14v5H2z" fill="#0b0b18" />
          <path d="M4 13h9" stroke="#ddd" stroke-dasharray="2 1" />
        </svg>
        CIRCLE
      </h3>
      <h3>按 F1 键获得更多帮助</h3>
    </div>
  </aside>
</div>

<style>
  :global(body) {
    background: #696969;
  }

  .app {
    position: relative;
    display: flex;
    flex-direction: column;
    min-height: 100vh;
    font-family: 'Open Sans', 'Noto Sans CJK SC', sans-serif;
    font-size: 12px;
    line-height: 16px;
    color: #3c3c3c;
    overflow: hidden;
  }

  .defs {
    position: absolute;
    width: 0;
    height: 0;
  }

  button {
    display: flex;
    align-items: center;
    justify-content: center;
    margin: 0;
    padding: 0;
    border: none;
    background: none;
    font: inherit;
    color: inherit;
    white-space: nowrap;
  }

  h1,
  h2,
  h3,
  p {
    margin: 0;
    font-size: inherit;
    font-weight: normal;
  }

  input,
  select {
    min-width: 0;
    margin: 0;
    padding: 0;
    border: none;
    outline: none;
    background: none;
    font: inherit;
    color: inherit;
    appearance: none;
  }

  .icon {
    flex: none;
    width: 16px;
    height: 16px;
    fill: none;
    stroke: #3a4046;
    overflow: visible;
  }

  .icon.big {
    width: 32px;
    height: 32px;
  }

  .glyph {
    font-family: 'Open Sans', sans-serif;
    font-size: 20px;
    font-weight: 600;
    fill: #33383c;
    stroke: none;
  }

  .caret {
    flex: none;
    width: 9px;
    height: 5px;
    fill: #333;
  }

  .caret.small {
    width: 6px;
    height: 4px;
  }

  .dots {
    display: block;
    width: 13px;
    height: 5px;
    background:
      linear-gradient(var(--under) 50%, transparent 50%) 0 1px / 2px 2px,
      linear-gradient(90deg, #111 50%, transparent 50%) 0 0 / 2px 2px;
  }

  /* title and menu */
  header {
    display: grid;
    grid-template-columns: 41px 1fr;
    grid-template-rows: 24px 22px;
    background: #6e6e6e;
  }

  .logo {
    grid-row: span 2;
    align-self: start;
    gap: 3px;
    height: 41px;
    padding-left: 2px;
    border: 1px solid #222;
    box-sizing: border-box;
    background: linear-gradient(#a9a9a9, #6c6c6c 60%, #8d8d8d);
  }

  .titlebar {
    display: flex;
    background: #ebebeb;
    border-bottom: 1px solid #333;
    min-width: 0;
  }

  .quick,
  .search {
    display: flex;
    align-items: center;
    box-sizing: border-box;
    border: 1px solid #333;
    border-bottom: none;
    background: linear-gradient(#b6b6b6, #8c8c8c);
  }

  .quick {
    width: 175px;
    padding-left: 4px;
  }

  .quick button {
    width: 23px;
    height: 22px;
  }

  .quick .wide {
    width: 35px;
    gap: 4px;
  }

  .quick .faded {
    background: #d4d4d4;
  }

  .faded .caret {
    fill: #999;
  }

  .quick .custom {
    width: 12px;
    flex-direction: column;
    gap: 1px;
  }

  .custom i {
    width: 7px;
    height: 1px;
    background: #000;
  }

  h1 {
    flex: 1;
    display: flex;
    justify-content: center;
    gap: 24px;
    padding-left: 24px;
    color: #1c1c1c;
    font-size: 16px;
    line-height: 25px;
    white-space: nowrap;
  }

  .search {
    width: 328px;
  }

  .search .toggle {
    width: 12px;
  }

  .search input {
    width: 180px;
    height: 21px;
    padding-left: 4px;
    box-sizing: border-box;
    background: #f8f8f8;
  }

  .search input::placeholder {
    color: #777;
    font-size: 12px;
    font-style: italic;
    opacity: 1;
  }

  .search button:not(.toggle) {
    width: 23px;
  }

  .search .wide:not(.toggle) {
    width: 33px;
    gap: 5px;
  }

  .help {
    width: 14px;
    border: 1px solid #222;
    border-radius: 50%;
    background: #f2f2f2;
    line-height: 14px;
    color: #222;
  }

  .window-buttons {
    display: flex;
    align-items: flex-start;
    padding: 0 3px 0 22px;
  }

  .window-buttons button {
    width: 26px;
    height: 19px;
  }

  .window-buttons svg {
    width: 12px;
    height: 12px;
    fill: none;
    stroke: #222;
  }

  .window-buttons .close {
    width: 45px;
    background: #bcbcbc;
  }

  .window-buttons .close svg {
    stroke: #fff;
  }

  .menubar {
    display: flex;
    gap: 25px;
    padding: 0 4px 0 14px;
    background: linear-gradient(#a2a2a2, #5a5a5a);
    border-bottom: 1px solid #000;
    color: #f4f4f4;
    font-family: 'Noto Sans', 'Noto Sans CJK SC', sans-serif;
  }

  .doc-buttons {
    display: flex;
    gap: 5px;
    margin-left: auto;
  }

  .doc-buttons svg {
    width: 12px;
    height: 12px;
    fill: #eee;
    stroke: #333;
    stroke-width: 0.5;
  }

  .tabs {
    display: flex;
    height: 19px;
    padding-left: 3px;
    background: #404040;
  }

  .tabs button {
    padding: 0 10px;
    color: #fff;
    font-weight: 500;
  }

  .tabs .current {
    margin-top: 2px;
    background: linear-gradient(#f6f6f6, #dedede);
    color: #333;
  }

  .tabs .minimize {
    padding-left: 22px;
  }

  .minimize span {
    display: flex;
    align-items: center;
    justify-content: center;
    width: 13px;
    height: 8px;
    border-radius: 2px;
    background: #e5e5e5;
  }

  /* ribbon */
  .ribbon {
    display: flex;
    padding-left: 2px;
    border-top: 1px solid #fff;
    border-bottom: 1px solid #fff;
    background: linear-gradient(#d5d5d5, #8d8d8d);
    box-shadow: 0 1px #999;
  }

  .panel {
    box-sizing: border-box;
    border-right: 1px solid #a5a5a5;
    background: linear-gradient(#e0e1e2, #fbfbfb 77px);
  }

  .draw { width: 111px; }
  .modify { width: 158px; }
  .annotate { width: 136px; }
  .layers { width: 206px; }
  .block { width: 136px; }
  .props { width: 204px; }
  .utils,
  .clipboard { width: 74px; }

  .clipboard {
    border-right: none;
  }

  .body {
    display: flex;
    justify-content: space-between;
    height: 77px;
    padding: 4px 2px 0;
    box-sizing: border-box;
  }

  .panel h2 {
    position: relative;
    display: flex;
    align-items: center;
    justify-content: center;
    gap: 6px;
    height: 20px;
    box-sizing: border-box;
    border-top: 1px solid #c4c4c4;
    background: linear-gradient(#d9dadb, #f3f3f3);
  }

  .launcher {
    position: absolute;
    right: 4px;
    bottom: 6px;
  }

  .launcher path {
    fill: none;
    stroke: #333;
  }

  .large {
    flex: 1;
    flex-direction: column;
    justify-content: flex-start;
    gap: 4px;
    line-height: 18px;
  }

  .large .caret {
    margin-top: -2px;
  }

  .big-a {
    height: 32px;
    font-family: Lato, sans-serif;
    font-size: 38px;
    line-height: 34px;
  }

  .stack {
    display: flex;
    flex-direction: column;
    gap: 2px;
  }

  .row {
    display: flex;
    align-items: center;
    justify-content: space-between;
    gap: 4px;
  }

  .group,
  .split {
    display: flex;
  }

  .tool {
    width: 22px;
    height: 22px;
    box-sizing: border-box;
    border: 1px solid #c8cacc;
    background: linear-gradient(#fafafa, #eeeff0);
  }

  .group .tool:not(:first-child) {
    border-left: none;
  }

  .modify .group .tool {
    width: 23px;
  }

  .modify .group {
    padding-right: 1px;
  }

  .layers .group .tool:nth-last-child(1):not(:first-child) {
    width: 23px;
  }

  .drop {
    width: 10px;
    box-sizing: border-box;
    border: 1px solid #c8cacc;
    border-left: none;
    background: #f6f6f6;
  }

  .active .tool,
  .active .drop {
    border-color: #2a6fa8;
    background: linear-gradient(#e6f5fc, #b4dff4);
  }

  .annotate .stack,
  .block .stack {
    flex: none;
  }

  .annotate .stack {
    width: 83px;
    padding-left: 3px;
  }

  .block .stack {
    width: 84px;
  }

  .command {
    justify-content: flex-start;
    gap: 4px;
    height: 22px;
  }

  .annotate .command {
    gap: 3px;
  }

  .command .caret {
    margin-left: 4px;
  }

  .layers .stack,
  .props .stack {
    flex: 1;
  }

  .combo {
    display: flex;
    align-items: center;
    gap: 3px;
    height: 22px;
    padding: 0 3px 0 2px;
    box-sizing: border-box;
    border: 1px solid #c8cacc;
    background: linear-gradient(#fcfcfc, #eeeff0);
  }

  .combo select {
    flex: 1;
    height: 20px;
  }

  .props .combo {
    flex: 1;
    gap: 2px;
  }

  .props .row .icon {
    margin-left: 1px;
  }

  .props .row {
    gap: 3px;
  }

  .swatch {
    width: 14px;
    height: 14px;
    border: 1px solid #000;
    background: #fff;
  }

  .swatch.small {
    width: 12px;
    height: 12px;
    margin: 0 2px 0 1px;
  }

  .layer .icon:first-child {
    margin-right: 2px;
  }

  .sample {
    width: 60px;
    height: 2px;
    margin-left: 5px;
    background: #777;
  }

  .sample.thick {
    width: 64px;
    height: 4px;
    margin-left: 1px;
    background: #000;
  }

  /* workspace */
  main {
    flex: 1;
    display: flex;
    padding-top: 5px;
  }

  .dock {
    width: 29px;
  }

  .dock.right {
    width: 32px;
    padding-left: 4px;
    box-sizing: border-box;
  }

  .toolbar {
    width: 25px;
    box-sizing: border-box;
    border: 1px solid #333;
    border-top: none;
    background: #ededed;
  }

  .toolbar button {
    width: 22px;
    height: 22px;
  }

  .handle {
    --under: #5d5d5d;
    height: 9px;
    padding: 2px 3px;
    box-sizing: border-box;
    background: #5d5d5d;
  }

  .toolbar hr {
    height: 1px;
    margin: 2px 2px 3px;
    border: none;
    background: #999;
  }

  .document {
    flex: 1;
    display: flex;
    flex-direction: column;
    min-width: 0;
    margin-bottom: 4px;
    border: 2px solid #8a8a8a;
    border-width: 2px 2px 1px 2px;
    border-right-color: #fff;
    border-bottom-color: #fff;
  }

  .canvas {
    position: relative;
    flex: 1;
    background: #000;
    overflow: hidden;
  }

  .drawing {
    position: absolute;
    width: 100%;
    height: 100%;
    fill: none;
    stroke: #fff;
    shape-rendering: crispEdges;
  }

  .track {
    stroke-width: 1.3;
    stroke-dasharray: 1.3 3.7;
    shape-rendering: geometricPrecision;
  }

  .dim {
    stroke: #aaa;
    stroke-dasharray: 1 3;
    shape-rendering: geometricPrecision;
  }

  .node {
    fill: #555;
    stroke: none;
  }

  .ucs {
    position: absolute;
    left: 0;
    bottom: 0;
    fill: none;
    stroke: #fff;
  }

  .ucs text {
    font-family: Lato, sans-serif;
    font-size: 20px;
    font-weight: 300;
    fill: #fff;
    stroke: none;
  }

  .radius {
    position: absolute;
    left: 687px;
    top: 286px;
    width: 53px;
    height: 22px;
    padding: 2px 3px;
    box-sizing: border-box;
    border: 1px solid #b5b583;
    background: #fff;
  }

  .radius input {
    display: block;
    width: 39px;
    height: 16px;
    background: #3399ff;
    color: #fff;
    line-height: 16px;
  }

  .polar {
    position: absolute;
    left: 795px;
    top: 328px;
    padding: 2px 9px 2px 3px;
    border: 1px solid #b5b583;
    background: #17135a;
    color: #d0cca0;
    white-space: pre;
  }

  .sheets {
    display: flex;
    height: 15px;
    border-bottom: 1px solid #aaa;
    background: #f0f0f0;
    color: #000;
  }

  .step {
    width: 14px;
    box-sizing: border-box;
    border-right: 1px solid #999;
  }

  .step svg {
    width: 10px;
    height: 10px;
    fill: #555;
  }

  .sheet {
    padding: 0 4px 0 6px;
  }

  .sheet.model {
    padding: 0 10px;
    background: #000;
    color: #fff;
    clip-path: polygon(0 0, 100% 0, calc(100% - 6px) 100%, 6px 100%);
  }

  .slash {
    width: 6px;
    height: 14px;
    stroke: #222;
  }

  /* command line */
  .console {
    display: flex;
    height: 58px;
    background: #a3a3a3;
    color: #222;
    font-size: 16px;
    border-bottom: 1px solid #000;
  }

  .grip {
    --under: #a3a3a3;
    padding: 3px 2px 0 1px;
  }

  .console code {
    font-family: 'Liberation Mono', monospace;
    font-size: 13px;
    white-space: pre;
  }

  .lines {
    flex: 1;
    display: flex;
    flex-direction: column;
    background: #fff;
  }

  .history {
    display: flex;
    height: 39px;
    border-bottom: 1px solid #999;
  }

  .log {
    flex: 1;
    padding-left: 2px;
  }

  .log p {
    height: 16px;
    line-height: 14px;
  }

  .vscroll {
    display: flex;
    flex-direction: column;
    justify-content: space-between;
    width: 16px;
    padding: 4px 0;
    box-sizing: border-box;
    background: #f0f0f0;
  }

  .vscroll svg,
  .hscroll svg {
    width: 8px;
    height: 8px;
    fill: none;
    stroke: #444;
    stroke-width: 1.500;
  }

  .prompt {
    flex: 1;
    display: flex;
    align-items: center;
    padding-left: 2px;
  }

  .prompt input {
    flex: 1;
    height: 16px;
  }

  .hscroll {
    display: flex;
    align-items: center;
    width: 70px;
    height: 17px;
    margin-right: 16px;
    background: #f0f0f0;
  }

  .hscroll button {
    width: 20px;
  }

  .hscroll i {
    width: 17px;
    height: 16px;
    margin-right: 13px;
    background: #cdcdcd;
  }

  /* status bar */
  footer {
    display: flex;
    height: 20px;
    background: linear-gradient(#949494, #6f6f6f);
    color: #000;
  }

  footer output {
    width: 194px;
    padding-left: 11px;
    font-family: 'DejaVu Sans Mono', monospace;
    font-size: 10px;
    line-height: 24px;
    white-space: nowrap;
  }

  .cluster {
    display: flex;
    margin-right: 18px;
  }

  .cluster.end {
    margin-left: auto;
  }

  .cluster:nth-last-child(2) {
    margin-right: 5px;
  }

  .cluster.last {
    margin-right: 3px;
  }

  .cluster button {
    width: 22px;
    box-sizing: border-box;
    border-left: 1px solid #444;
    background: linear-gradient(#cfcfcf, #a6a6a6);
  }

  .cluster button:last-child {
    border-right: 1px solid #444;
  }

  .cluster .on {
    background: linear-gradient(#d6eef4, #b7dfe9 50%, #8fcbdb 50%, #b4e2ec);
  }

  .cluster .scale {
    width: 54px;
    gap: 2px;
  }

  .scale code {
    font-family: 'DejaVu Sans Mono', monospace;
    font-size: 10px;
  }

  .cluster .workspace {
    width: 132px;
    gap: 2px;
  }

  .cluster .narrow {
    width: 14px;
  }

  /* overlays */
  .marker {
    position: absolute;
    left: 37px;
    top: 91px;
    width: 52px;
    height: 30px;
    fill: none;
    stroke: #e06a6a;
  }

  .tooltip {
    position: absolute;
    left: 61px;
    top: 121px;
    width: 310px;
    box-sizing: border-box;
    border: 1px solid #767676;
    border-radius: 2px;
    background: #fff;
    box-shadow: 3px 3px 3px rgba(0, 0, 0, 0.5);
    color: #555;
  }

  .intro {
    padding: 7px 7px 23px;
    background: linear-gradient(#fff, #f3f3f9 44px, #fff 46px);
  }

  .intro p {
    padding-top: 5px;
  }

  .intro .example {
    padding-top: 18px;
  }

  .intro .subject,
  .intro .example {
    font-family: 'Noto Sans CJK TC', sans-serif;
  }

  .intro svg {
    display: block;
    margin: 22px 0 0 67px;
  }

  .intro circle {
    fill: #fef9ff;
    stroke: #e0353b;
  }

  .intro text {
    font-family: 'DejaVu Sans', sans-serif;
    font-size: 14px;
    font-weight: bold;
    fill: #2cab16;
  }

  .intro .cross {
    font-size: 16px;
  }

  .tooltip h3 {
    display: flex;
    align-items: center;
    gap: 4px;
    font-weight: bold;
  }

  .more {
    display: flex;
    flex-direction: column;
    gap: 7px;
    padding: 5px 7px 6px;
    border-top: 1px solid #aaa;
    background: #e5e4f1;
  }
</style>
